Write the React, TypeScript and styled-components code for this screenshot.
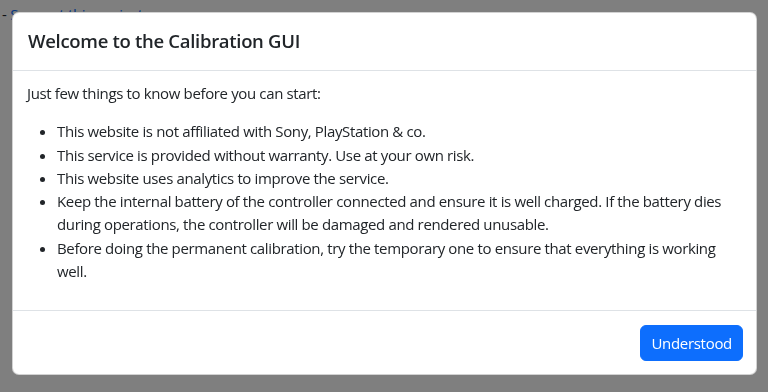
import React, { ReactElement } from "react";
import styled, { createGlobalStyle } from "styled-components";

const GlobalStyle = createGlobalStyle`
  html, body {
    margin: 0;
    padding: 0;
    width: 768px;
    height: 392px;
    overflow: hidden;
    background: #ffffff;
    font-family: "Open Sans", "Noto Sans", sans-serif;
    color: #212529;
  }
`;

const PageStyled = styled.div`
  width: 768px;
  height: 392px;
  padding: 3px 0 0 2px;
  box-sizing: border-box;
`;

const BehindTextStyled = styled.div`
  font-size: 15px;
  line-height: 22px;
  letter-spacing: -0.3px;
  a {
    color: #0d6efd;
    text-decoration: none;
  }
`;

const BackdropStyled = styled.div`
  position: fixed;
  inset: 0;
  background: rgba(0, 0, 0, 0.5);
`;

const DialogStyled = styled.div`
  position: fixed;
  top: 12px;
  left: 12px;
  width: 745px;
  height: 363px;
  box-sizing: border-box;
  display: flex;
  flex-direction: column;
  background: #ffffff;
  border: 1px solid rgba(0, 0, 0, 0.175);
  border-radius: 7px;
  overflow: hidden;
`;

const HeaderStyled = styled.header`
  height: 58px;
  box-sizing: border-box;
  display: flex;
  align-items: center;
  padding: 0 15px 2px;
  border-bottom: 1px solid #dee2e6;
`;

const TitleStyled = styled.h5`
  margin: 0;
  font-size: 18.5px;
  font-weight: 600;
  line-height: 1.5;
  letter-spacing: -0.3px;
`;

const BodyStyled = styled.section`
  flex: 1;
  padding: 11px 15px 0 14px;
  font-size: 15px;
  line-height: 23.3px;
  letter-spacing: -0.36px;
  p {
    margin: 0 0 15px;
  }
`;

const ListStyled = styled.ul`
  margin: 0;
  padding-left: 30px;
`;

const FooterStyled = styled.footer`
  height: 64px;
  box-sizing: border-box;
  display: flex;
  align-items: center;
  justify-content: flex-end;
  padding: 0 13px 0 12px;
  border-top: 1px solid #dee2e6;
`;

const ButtonStyled = styled.button`
  height: 36px;
  padding: 0 10px;
  font-family: inherit;
  font-size: 15px;
  font-weight: 500;
  letter-spacing: -0.3px;
  color: #ffffff;
  background: #0d6efd;
  border: 1px solid #0d6efd;
  border-radius: 6px;
  cursor: pointer;
`;

const items = [
  "This website is not affiliated with Sony, PlayStation & co.",
  "This service is provided without warranty. Use at your own risk.",
  "This website uses analytics to improve the service.",
  "Keep the internal battery of the controller connected and ensure it is well charged. If the battery dies during operations, the controller will be damaged and rendered unusable.",
  "Before doing the permanent calibration, try the temporary one to ensure that everything is working well.",
];

const App = (): ReactElement => (
  <>
    <GlobalStyle />
    <PageStyled>
      <BehindTextStyled>
        - <a href="#">Support this project</a>
      </BehindTextStyled>
    </PageStyled>
    <BackdropStyled />
    <DialogStyled>
      <HeaderStyled>
        <TitleStyled>Welcome to the Calibration GUI</TitleStyled>
      </HeaderStyled>
      <BodyStyled>
        <p>Just few things to know before you can start:</p>
        <ListStyled>
          {items.map((item) => (
            <li key={item}>{item}</li>
          ))}
        </ListStyled>
      </BodyStyled>
      <FooterStyled>
        <ButtonStyled>Understood</ButtonStyled>
      </FooterStyled>
    </DialogStyled>
  </>
);

export default App;
